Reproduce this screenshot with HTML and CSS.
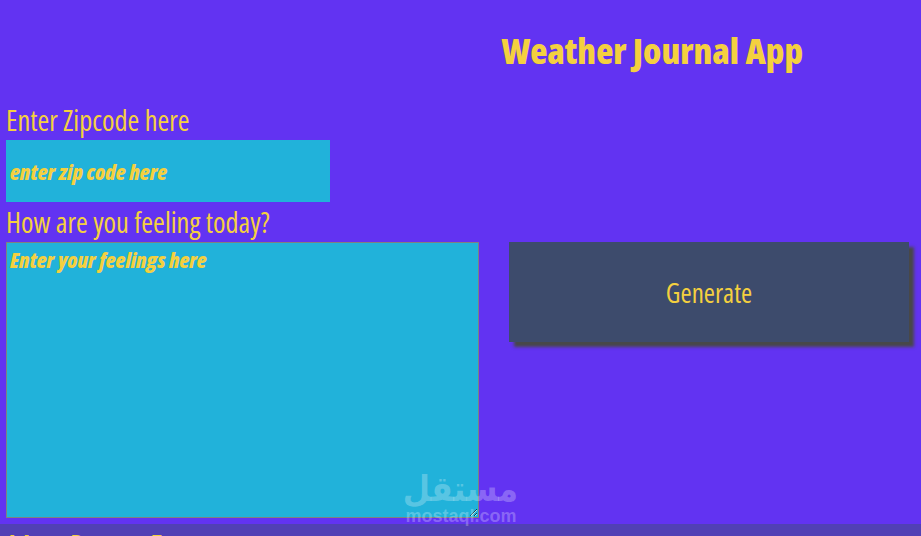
FILE: index.html
```html
<!DOCTYPE html>
<html lang="en">
<head>
<meta charset="utf-8">
<title>Weather Journal App</title>
<link rel="stylesheet" href="styles.css">
</head>
<body>
<main class="app">
  <header class="title-row">
    <h1 class="title">Weather Journal App</h1>
  </header>
  <section class="zip">
    <label class="label" for="zip">Enter Zipcode here</label>
    <input class="zip-input" id="zip" type="text" placeholder="enter zip code here">
  </section>
  <section class="feel">
    <label class="label" for="feelings">How are you feeling today?</label>
    <div class="feel-row">
      <textarea class="feel-input" id="feelings" placeholder="Enter your feelings here"></textarea>
      <button class="generate" type="button">Generate</button>
    </div>
  </section>
  <section class="recent">
    <div class="recent-title">Most Recent Entry</div>
  </section>
</main>
<div class="watermark" aria-hidden="true">
  <div class="wm-ar" lang="ar" dir="rtl">مستقل</div>
  <div class="wm-en">mostaql.com</div>
</div>
</body>
</html>
```
FILE: styles.css
```css
* { box-sizing: border-box; }
html, body { margin: 0; height: 536px; overflow: hidden; }
body {
  background: #6233f2;
  color: #f4d03f;
  font-family: "Open Sans", sans-serif;
  font-stretch: 75%;
  position: relative;
}
.app { display: flex; flex-direction: column; }
.title-row { height: 104px; padding: 27px 118px 0 0; display: flex; justify-content: flex-end; }
.title { margin: 0; font-size: 35.5px; line-height: 46px; font-weight: 800; }
.zip { padding-left: 6px; display: flex; flex-direction: column; }
.label { font-size: 28.5px; line-height: 32px; height: 36px; font-weight: 500; }
.zip-input {
  width: 324px; height: 62px; border: 0; padding: 1px 4px 0; background: #21b2da;
  color: #f4d03f; font: italic 800 21.4px "Open Sans", sans-serif; font-stretch: 75%; outline: 0;
}
.zip-input::placeholder, .feel-input::placeholder { color: #f4d03f; opacity: 1; }
.feel { padding: 4px 0 0 6px; display: flex; flex-direction: column; }
.feel-row { display: flex; align-items: flex-start; gap: 30px; }
.feel-input {
  width: 473px; height: 276px; margin: 0; border: 1px solid #808080; padding: 5px 3px; background: #21b2da;
  color: #f4d03f; font: italic 800 21.3px/24px "Open Sans", sans-serif; font-stretch: 75%; outline: 0; display: block;
}
.generate {
  width: 400px; height: 100px; border: 0; padding: 1px 0 0; background: #3d4b6c; color: #f4d03f;
  font: 500 27px "Open Sans", sans-serif; font-stretch: 75%; box-shadow: 5px 5px 3px #484848;
}
.recent { margin-top: 6px; height: 12px; overflow: hidden; background: #5140b5; padding: 7px 0 0 8px; }
.recent-title { font-size: 32px; line-height: 32px; font-weight: 500; }
.watermark {
  position: absolute; left: 404px; top: 471px; width: 114px; text-align: center;
  color: rgba(255,255,255,0.26); font-family: "DejaVu Sans", sans-serif; font-weight: 700;
}
.wm-ar { font-size: 35px; line-height: 37px; }
.wm-en { font-size: 18px; line-height: 16px; font-family: "Liberation Sans", sans-serif; }
```
